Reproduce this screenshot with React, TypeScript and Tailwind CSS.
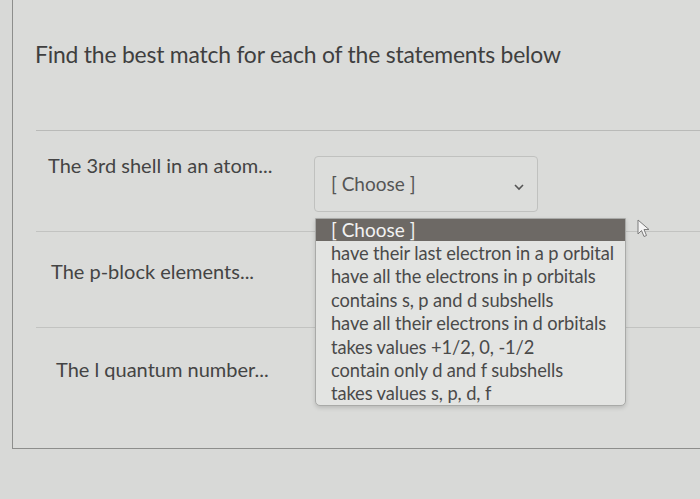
import React from "react";

const options = [
  "have their last electron in a p orbital",
  "have all the electrons in p orbitals",
  "contains s, p and d subshells",
  "have all their electrons in d orbitals",
  "takes values +1/2, 0, -1/2",
  "contain only d and f subshells",
  "takes values s, p, d, f",
];

export default function App() {
  return (
    <div
      className="relative w-[700px] h-[499px] overflow-hidden bg-[#d8d9d7] text-[#444]"
      style={{ fontFamily: "Lato, 'Open Sans', sans-serif" }}
    >
      <div className="ml-[12px] h-[449px] border-l border-b border-[#8d8e8c] bg-[#dadbd9]">
        <div className="pt-[40px] pl-[22px] text-[22.9px] leading-[28px] tracking-[-0.2px] text-[#3f3f3f]">
          Find the best match for each of the statements below
        </div>
        <div className="mt-[62px] ml-[23px] border-t border-[#b9bab8]" />
        {/* Row 1 */}
        <div className="ml-[23px] h-[101px] flex border-b border-[#c2c3c1]">
          <div className="w-[278px] pt-[22px] pl-[12px] text-[20px] leading-[24px]">
            The 3rd shell in an atom...
          </div>
          <div className="pt-[25px]">
            <div className="w-[224px] h-[56px] rounded-[4px] border border-[#c0c1bf] bg-[#dcdddb] flex items-center justify-between pl-[16px] pr-[12px]">
              <span className="text-[19px] leading-[22px] text-[#555]">[ Choose ]</span>
              <svg width="12" height="8" viewBox="0 0 12 8" className="mt-[6px]">
                <path d="M2 2 L6 6 L10 2" fill="none" stroke="#555" strokeWidth="1.6" />
              </svg>
            </div>
          </div>
        </div>
        {/* Row 2 */}
        <div className="ml-[23px] h-[96px] flex border-b border-[#c2c3c1]">
          <div className="pt-[27px] pl-[15px] text-[20px] leading-[24px]">The p-block elements...</div>
        </div>
        {/* Row 3 */}
        <div className="ml-[23px] flex">
          <div className="pt-[29px] pl-[20px] text-[20px] leading-[24px]">The l quantum number...</div>
        </div>
      </div>

      {/* Dropdown list */}
      <div className="absolute left-[315px] top-[218px] w-[311px] h-[188px] bg-[#e3e4e2] border border-[#a9aaa8] rounded-b-[5px] shadow-[0_2px_4px_rgba(0,0,0,0.15)] overflow-hidden">
        <div className="h-[22px] bg-[#6d6965] text-[#f2f2f2] pl-[15px] text-[19px] leading-[22px]">
          [ Choose ]
        </div>
        <div className="pt-[1px]">
          {options.map((o) => (
            <div key={o} className="pl-[15px] text-[18.3px] leading-[23.4px] tracking-[-0.1px] text-[#4a4a4a] whitespace-nowrap">
              {o}
            </div>
          ))}
        </div>
      </div>

      {/* Cursor */}
      <svg className="absolute left-[637px] top-[219px]" width="14" height="20" viewBox="0 0 14 20">
        <path d="M1 1 L1 15 L4.5 11.5 L7 17.5 L9.5 16.5 L7 10.5 L12 10.5 Z" fill="#f4f4f4" stroke="#7b7b7b" strokeWidth="1" strokeLinejoin="round" />
      </svg>
    </div>
  );
}
